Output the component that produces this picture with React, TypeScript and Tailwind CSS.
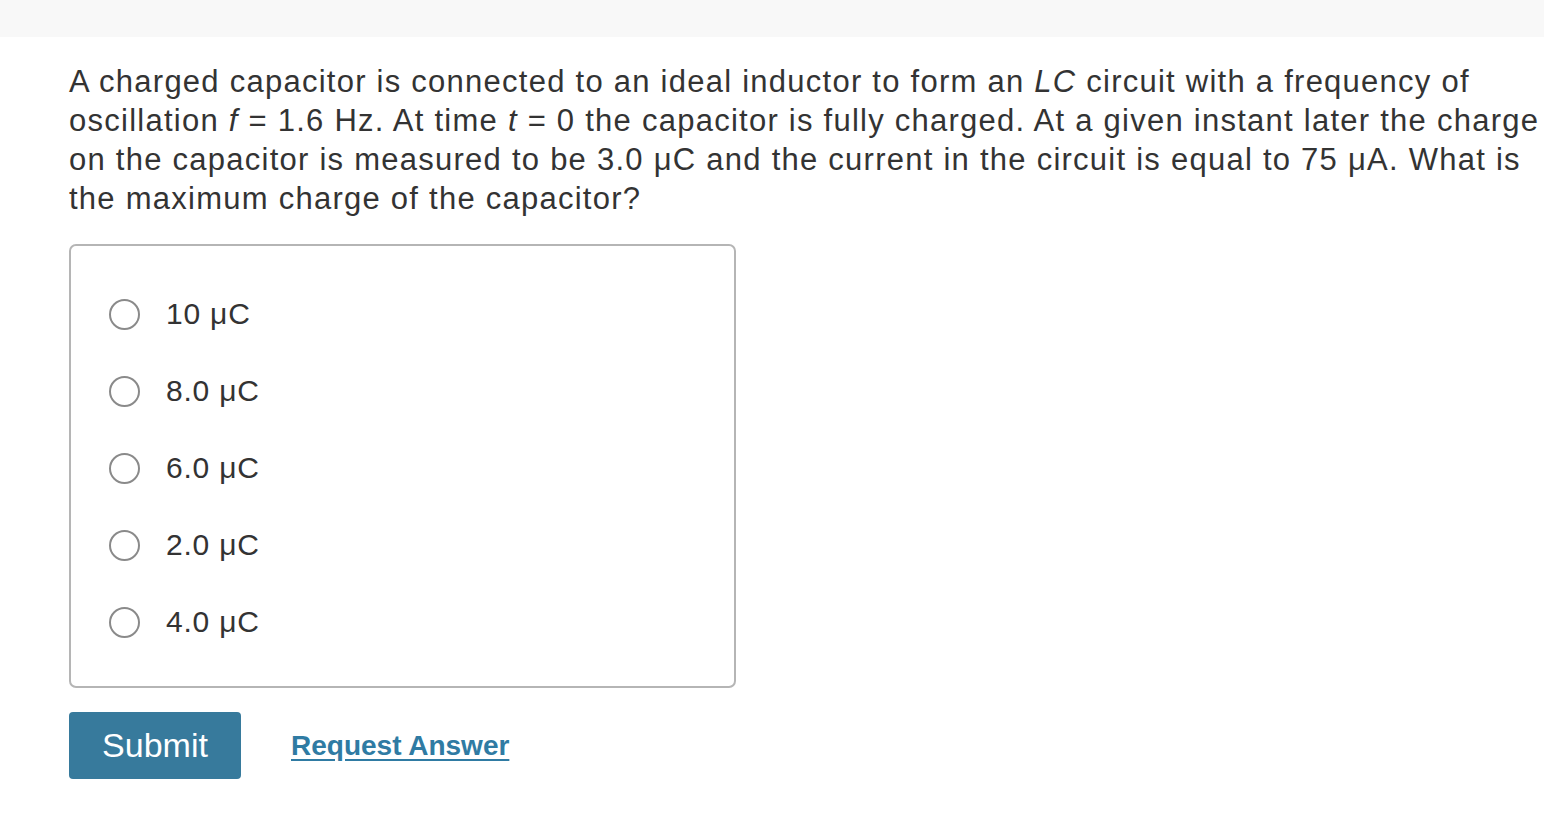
const options = ['10 μC', '8.0 μC', '6.0 μC', '2.0 μC', '4.0 μC'];

export default function App() {
  return (
    <div className="min-h-[822px] bg-white text-[#333333]" style={{ fontFamily: '"Liberation Sans", Arial, sans-serif' }}>
      <div className="h-[37px] bg-[#f8f8f8]" />
      <div className="pl-[69px] pr-[4px] pt-[25px]">
        <p className="text-[31px] leading-[39px] tracking-[1.25px] whitespace-nowrap">
          A charged capacitor is connected to an ideal inductor to form an <i>LC</i> circuit with a frequency of
          <br />
          oscillation <i>f</i> = 1.6 Hz. At time <i>t</i> = 0 the capacitor is fully charged. At a given instant later the charge
          <br />
          on the capacitor is measured to be 3.0 μC and the current in the circuit is equal to 75 μA. What is
          <br />
          the maximum charge of the capacitor?
        </p>

        <div className="mt-[26px] w-[667px] h-[444px] rounded-[7px] border-2 border-[#b5b5b5] pl-[38px] pt-[48px] flex flex-col gap-[37px]">
          {options.map((o) => (
            <label key={o} className="flex items-center gap-[26px] h-[40px]">
              <span className="w-[31px] h-[31px] rounded-full border-2 border-[#8a8a8a] bg-white shrink-0" />
              <span className="text-[30px] leading-none tracking-[0.8px]">{o}</span>
            </label>
          ))}
        </div>

        <div className="mt-[24px] flex items-center gap-[50px]">
          <button
            type="button"
            className="w-[172px] h-[67px] rounded-[4px] bg-[#377a9c] text-white text-[34px]"
          >
            Submit
          </button>
          <a href="#" className="text-[28px] font-bold text-[#2f7ba3] underline underline-offset-4">
            Request Answer
          </a>
        </div>
      </div>
    </div>
  );
}
